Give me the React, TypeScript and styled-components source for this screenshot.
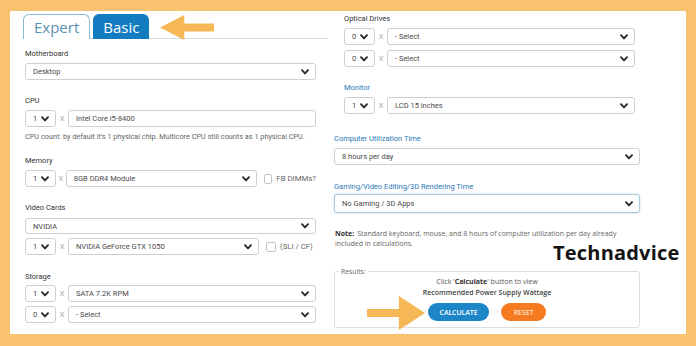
import React from "react";
import styled, { createGlobalStyle } from "styled-components";

const Global = createGlobalStyle`
  html, body { margin: 0; padding: 0; }
  body {
    width: 696px; height: 346px; overflow: hidden;
    background: #f8c271;
    font-family: "Open Sans", "Liberation Sans", sans-serif;
  }
`;

const Panel = styled.div`
  position: relative;
  margin: 11px 10px 0 10px;
  height: 323px;
  background: #ffffff;
  display: flex;
`;

const LeftCol = styled.div`
  width: 318px;
  padding-top: 2px;
  display: flex;
  flex-direction: column;
`;

const RightCol = styled.div`
  flex: 1;
  padding-left: 6px;
  display: flex;
  flex-direction: column;
`;

const TabBar = styled.div`
  display: flex;
  align-items: flex-end;
  gap: 3px;
  margin-left: 13px;
  height: 25px;
  flex-shrink: 0;
  border-bottom: 1px solid #d4dbe0;
`;

const Tab = styled.div<{ $active?: boolean }>`
  height: 24px;
  padding: 0 ${(p) => (p.$active ? 9 : 10)}px;
  display: flex;
  align-items: center;
  font-size: 15px;
  border-radius: 6px 6px 0 0;
  border: 1px solid ${(p) => (p.$active ? "#137cc1" : "#88b8d3")};
  border-bottom: none;
  background: ${(p) => (p.$active ? "#137cc1" : "#ffffff")};
  color: ${(p) => (p.$active ? "#ffffff" : "#5b91b1")};
  margin-bottom: -1px;
`;

const ArrowWrap = styled.div`
  position: absolute;
  pointer-events: none;
`;

const Section = styled.div<{ $top: number; $indent?: number; $width?: number }>`
  margin-top: ${(p) => p.$top}px;
  margin-left: ${(p) => p.$indent ?? 15}px;
  width: ${(p) => p.$width ?? 291}px;
  flex-shrink: 0;
  display: flex;
  flex-direction: column;
`;

const Label = styled.div<{ $blue?: boolean; $mb?: number }>`
  font-family: "Roboto", "Liberation Sans", sans-serif;
  font-size: 7.5px;
  line-height: 10px;
  height: 10px;
  margin-bottom: ${(p) => p.$mb ?? 4}px;
  color: ${(p) => (p.$blue ? "#2a78b6" : "#333333")};
`;

const Row = styled.div<{ $mt?: number }>`
  display: flex;
  align-items: center;
  flex-shrink: 0;
  margin-top: ${(p) => p.$mt ?? 0}px;
`;

const SelectBox = styled.div<{ $w?: number; $h?: number; $focus?: boolean }>`
  box-sizing: border-box;
  width: ${(p) => (p.$w ? `${p.$w}px` : "auto")};
  flex: ${(p) => (p.$w ? "0 0 auto" : "1 0 auto")};
  height: ${(p) => p.$h ?? 17}px;
  border: 1px solid ${(p) => (p.$focus ? "#a9c9dd" : "#cfcfcf")};
  box-shadow: ${(p) => (p.$focus ? "0 0 2px rgba(90,150,200,0.45)" : "none")};
  border-radius: 3px;
  background: #fff;
  display: flex;
  align-items: center;
  justify-content: space-between;
  padding: 0 6px 0 7px;
  font-family: "Roboto", "Liberation Sans", sans-serif;
  font-size: 7.5px;
  color: #4a4a4a;
  white-space: nowrap;
`;

const Times = styled.span`
  width: 12px;
  text-align: center;
  font-family: "Roboto", "Liberation Sans", sans-serif;
  font-size: 7.5px;
  color: #a8a8a8;
`;

const Help = styled.div`
  font-family: "Roboto", "Liberation Sans", sans-serif;
  font-size: 7.3px;
  line-height: 10px;
  margin-top: 5px;
  color: #666;
  white-space: nowrap;
`;

const Check = styled.span`
  box-sizing: border-box;
  width: 10px;
  height: 10px;
  border: 1px solid #c4c4c4;
  border-radius: 2px;
  margin: 0 4px 0 7px;
`;

const CheckText = styled.span`
  font-family: "Roboto", "Liberation Sans", sans-serif;
  font-size: 7.8px;
  color: #666;
  white-space: nowrap;
`;

const Note = styled.div`
  margin-top: 16px;
  margin-left: 1px;
  display: flex;
  flex-direction: column;
  align-items: flex-start;
  font-family: "Open Sans", "Liberation Sans", sans-serif;
  font-size: 7px;
  line-height: 10px;
  color: #666;
`;

const NoteLine = styled.div`
  display: flex;
  gap: 3px;
  white-space: nowrap;
`;

const NoteLead = styled.span`
  font-weight: 700;
  color: #333;
`;

const Watermark = styled.div`
  position: absolute;
  left: 543px;
  top: 233px;
  font-family: "Open Sans", "Liberation Sans", sans-serif;
  font-weight: 700;
  font-size: 20px;
  line-height: 18px;
  letter-spacing: 0.2px;
  color: #141414;
`;

const Results = styled.fieldset`
  margin: 18px 0 0 0;
  width: 306px;
  box-sizing: border-box;
  height: 61px;
  border: 1px solid #dedede;
  border-radius: 3px;
  padding: 0;
  display: flex;
  flex-direction: column;
  align-items: center;
  legend {
    margin-left: 4px;
    padding: 0 2px;
    font-size: 6.8px;
    color: #666;
  }
`;

const ResultText = styled.div<{ $bold?: boolean }>`
  font-size: 7px;
  line-height: 11px;
  color: ${(p) => (p.$bold ? "#444" : "#555")};
  font-weight: ${(p) => (p.$bold ? 600 : 400)};
  b { font-weight: 700; color: #333; }
`;

const Buttons = styled.div`
  display: flex;
  gap: 12px;
  margin-top: 5px;
`;

const Btn = styled.div<{ $color: string; $text: string; $w: number }>`
  width: ${(p) => p.$w}px;
  height: 18px;
  border-radius: 9px;
  background: ${(p) => p.$color};
  color: ${(p) => p.$text};
  display: flex;
  align-items: center;
  justify-content: center;
  font-size: 7px;
  font-weight: 600;
  letter-spacing: -0.1px;
`;

const Chevron = () => (
  <svg width="8" height="6" viewBox="0 0 8 6">
    <polyline points="1,1.2 4,4.4 7,1.2" fill="none" stroke="#2b2b2b" strokeWidth="1.9" strokeLinecap="round" strokeLinejoin="round" />
  </svg>
);

const Select: React.FC<{ text: string; w?: number; h?: number; focus?: boolean }> = ({ text, w, h, focus }) => (
  <SelectBox $w={w} $h={h} $focus={focus}>
    <span>{text}</span>
    <Chevron />
  </SelectBox>
);

const QtyRow: React.FC<{ qty: string; text: string; mt?: number; arrowless?: boolean; extra?: React.ReactNode; selectW?: number }> = ({ qty, text, mt, arrowless, extra, selectW }) => (
  <Row $mt={mt}>
    <Select text={qty} w={31} />
    <Times>X</Times>
    {arrowless ? (
      <SelectBox $w={selectW}>
        <span>{text}</span>
      </SelectBox>
    ) : (
      <Select text={text} w={selectW} />
    )}
    {extra}
  </Row>
);

const Arrow: React.FC<{ dir: "left" | "right"; w: number; h: number; shaft: number }> = ({ dir, w, h, shaft }) => {
  const mid = h / 2;
  const head = w * 0.45;
  const pts =
    dir === "left"
      ? `0,${mid} ${head},0 ${head},${mid - shaft / 2} ${w},${mid - shaft / 2} ${w},${mid + shaft / 2} ${head},${mid + shaft / 2} ${head},${h}`
      : `${w},${mid} ${w - head},0 ${w - head},${mid - shaft / 2} 0,${mid - shaft / 2} 0,${mid + shaft / 2} ${w - head},${mid + shaft / 2} ${w - head},${h}`;
  return (
    <svg width={w} height={h} viewBox={`0 0 ${w} ${h}`}>
      <polygon points={pts} fill="#f6b857" />
    </svg>
  );
};

export default function App() {
  return (
    <>
      <Global />
      <Panel>
        <LeftCol>
          <TabBar>
            <Tab>Expert</Tab>
            <Tab $active>Basic</Tab>
          </TabBar>

          <Section $top={10}>
            <Label>Motherboard</Label>
            <Select text="Desktop" />
          </Section>

          <Section $top={16}>
            <Label>CPU</Label>
            <QtyRow qty="1" text="Intel Core i5-8400" arrowless />
            <Help>CPU count: by default it's 1 physical chip. Multicore CPU still counts as 1 physical CPU.</Help>
          </Section>

          <Section $top={14}>
            <Label>Memory</Label>
            <QtyRow
              qty="1"
              text="8GB DDR4 Module"
              selectW={191}
              extra={
                <>
                  <Check />
                  <CheckText>FB DIMMs?</CheckText>
                </>
              }
            />
          </Section>

          <Section $top={16}>
            <Label $mb={5}>Video Cards</Label>
            <Select text="NVIDIA" h={16} />
            <QtyRow
              qty="1"
              text="NVIDIA GeForce GTX 1050"
              mt={4}
              selectW={191}
              extra={
                <>
                  <Check />
                  <CheckText>(SLI / CF)</CheckText>
                </>
              }
            />
          </Section>

          <Section $top={17}>
            <Label $mb={3}>Storage</Label>
            <QtyRow qty="1" text="SATA 7.2K RPM" />
            <QtyRow qty="0" text="- Select" mt={4} />
          </Section>
        </LeftCol>

        <RightCol>
          <Section $top={3} $indent={10} $width={291}>
            <Label>Optical Drives</Label>
            <QtyRow qty="0" text="- Select" />
            <QtyRow qty="0" text="- Select" mt={5} />
          </Section>

          <Section $top={16} $indent={10} $width={291}>
            <Label $blue>Monitor</Label>
            <QtyRow qty="1" text="LCD 15 inches" />
          </Section>

          <Section $top={20} $indent={0} $width={306}>
            <Label $blue>Computer Utilization Time</Label>
            <Select text="8 hours per day" />
          </Section>

          <Section $top={17} $indent={0} $width={306}>
            <Label $blue $mb={2}>Gaming/Video Editing/3D Rendering Time</Label>
            <Select text="No Gaming / 3D Apps" h={19} focus />
            <Note>
              <NoteLine>
                <NoteLead>Note:</NoteLead>
                <span>Standard keyboard, mouse, and 8 hours of computer utilization per day already</span>
              </NoteLine>
              <NoteLine>
                <span>included in calculations.</span>
              </NoteLine>
            </Note>
            <Results>
              <legend>Results:</legend>
              <ResultText>
                Click '<b>Calculate</b>' button to view
              </ResultText>
              <ResultText $bold>Recommended Power Supply Wattage</ResultText>
              <Buttons>
                <Btn $color="#1c86c8" $text="#ffffff" $w={61}>CALCULATE</Btn>
                <Btn $color="#f57b21" $text="#ffe0c8" $w={45}>RESET</Btn>
              </Buttons>
            </Results>
          </Section>
        </RightCol>

        <Watermark>Technadvice</Watermark>
        <ArrowWrap style={{ left: 150, top: 4 }}>
          <Arrow dir="left" w={54} h={25} shaft={8} />
        </ArrowWrap>
        <ArrowWrap style={{ left: 357, top: 285 }}>
          <Arrow dir="right" w={58} h={34} shaft={8} />
        </ArrowWrap>
      </Panel>
    </>
  );
}
